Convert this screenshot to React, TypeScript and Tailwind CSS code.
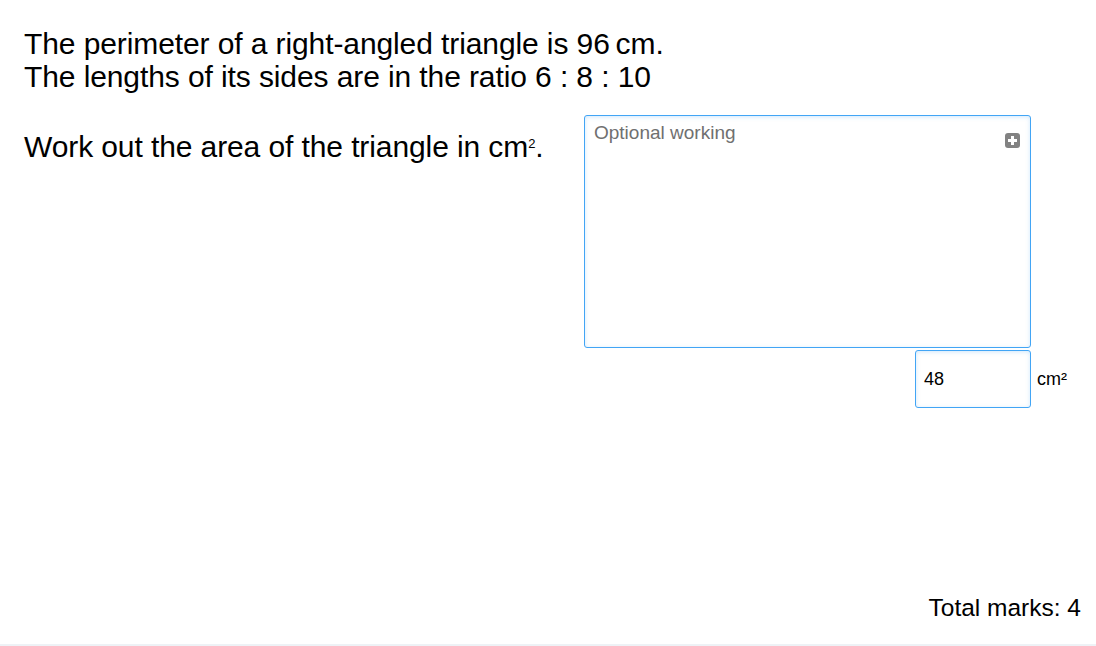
import React from "react";

export default function App() {
  return (
    <div className="w-[1096px] h-[646px] bg-white flex flex-col font-['Liberation_Sans',Arial,sans-serif] text-black">
      <div className="flex-1 pl-[24px] pr-[15px] pt-[27px] flex flex-col">
        <div className="text-[30px] leading-[33px] tracking-[-0.1px]">
          <p>The perimeter of a right-angled triangle is 96&#8201;cm.</p>
          <p>The lengths of its sides are in the ratio 6 : 8 : 10</p>
        </div>
        <div className="flex mt-[22px]">
          <div className="w-[560px] pt-[15px] text-[30px] leading-[33px] tracking-[-0.1px]">
            Work out the area of the triangle in cm<sup className="text-[13px] relative -top-[9px]">2</sup>.
          </div>
          <div className="flex flex-col items-end w-[447px]">
            <div className="relative w-[447px] h-[233px] border border-[#42a5f5] rounded-[3px] shadow-[inset_0_1px_4px_rgba(66,165,245,0.25)]">
              <div className="pl-[9px] pt-[3px] text-[19px] text-[#707070]">Optional working</div>
              <div className="absolute right-[10px] top-[17px] w-[15px] h-[15px] rounded-[3px] bg-[#828282] flex items-center justify-center">
                <svg width="11" height="11" viewBox="0 0 11 11">
                  <rect x="4" y="1" width="3" height="9" fill="white" />
                  <rect x="1" y="4" width="9" height="3" fill="white" />
                </svg>
              </div>
            </div>
            <div className="flex items-center mt-[2px] mr-[-51px]">
              <div className="w-[116px] h-[58px] border border-[#42a5f5] rounded-[3px] shadow-[inset_0_1px_4px_rgba(66,165,245,0.25)] flex items-center pl-[8px] text-[18px] text-black">
                48
              </div>
              <div className="ml-[6px] w-[45px] text-[18px] text-black">cm²</div>
            </div>
          </div>
        </div>
        <div className="flex-1" />
        <div className="text-right text-[24.5px] pb-[17px]">Total marks: 4</div>
      </div>
      <div className="h-[2px] bg-[#eef2f6]" />
    </div>
  );
}
